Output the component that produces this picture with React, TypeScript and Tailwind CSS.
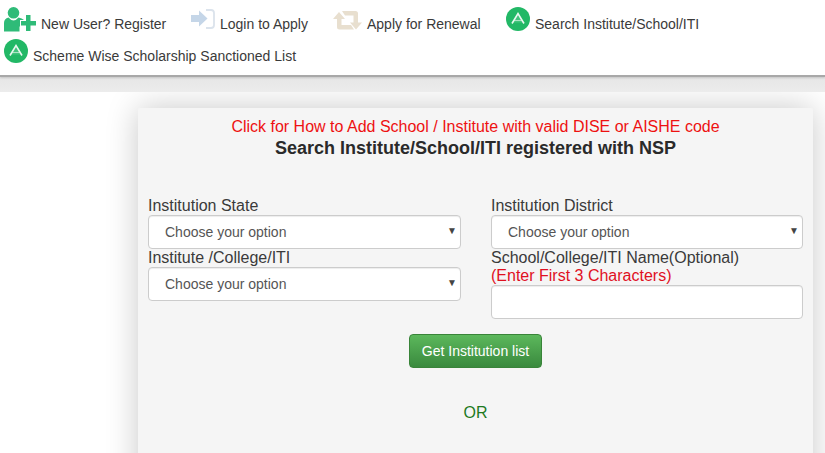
const UserPlusIcon = () => (
  <svg width="32" height="25" viewBox="0 0 32 25" className="shrink-0">
    <ellipse cx="9.5" cy="5.8" rx="5.8" ry="5.8" fill="#2fbb78" />
    <path d="M0 24.5 V16 Q0 11.5 4.5 10.5 Q7 13.5 9.5 13.5 Q12 13.5 14.5 10.5 Q18 11 20 13 H16 V19.5 H15.5 V24.5 Z" fill="#2fbb78" />
    <path d="M22 8 H26.5 V14 H32 V18.5 H26.5 V24 H22 V18.5 H17 V14 H22 Z" fill="#2fbb78" />
  </svg>
);

const LoginIcon = () => (
  <svg width="24" height="20" viewBox="0 0 24 20" className="mt-[2px] shrink-0">
    <path d="M0 6 H8 V1.5 L16.5 9.5 L8 17.5 V13 H0 Z" fill="#c5d6e8" />
    <path d="M15 1 H20 Q23 1 23 4 V16 Q23 19 20 19 H15" fill="none" stroke="#dbe3ec" strokeWidth="1.8" />
  </svg>
);

const RenewIcon = () => (
  <svg width="29" height="19" viewBox="0 0 29 19" className="mt-[4px] shrink-0">
    <path d="M0 8 L6 1 L12 8 H8.5 V14 H18 L21 18.5 H6.5 Q4 18.5 4 16 V8 Z" fill="#e8dfcf" />
    <path d="M29 11.5 L23 18.5 L17 11.5 H20.5 V4.5 H12 L9 0 H22.5 Q25 0 25 2.5 V11.5 Z" fill="#e8dfcf" />
  </svg>
);

const CircleIcon = () => (
  <svg width="24" height="24" viewBox="0 0 24 24" className="shrink-0">
    <circle cx="12" cy="12" r="12" fill="#22b866" />
    <path d="M12 7 L17 15.5 H7 Z" fill="#7fd8a6" opacity="0.35" />
    <path d="M6 16.5 L12 6.5 L18 16.5" fill="none" stroke="#ffffff" strokeWidth="1.6" opacity="0.9" />
    <path d="M8.5 13.5 H15.5" stroke="#ffffff" strokeWidth="1" opacity="0.55" />
  </svg>
);

function NavLink({ icon, label, className }: { icon: React.ReactNode; label: string; className?: string }) {
  return (
    <a className={`flex items-start gap-[5px] text-[14px] leading-[20px] text-[#3a3a3a] ${className ?? ""}`}>
      {icon}
      <span className="pt-[7px]">{label}</span>
    </a>
  );
}

function SelectBox() {
  return (
    <div className="relative">
      <select className="block h-[34px] w-full appearance-none rounded-[4px] border border-[#ccc] bg-white pl-4 text-[14px] text-[#555] shadow-[inset_0_1px_1px_rgba(0,0,0,0.075)]">
        <option>Choose your option</option>
      </select>
      <span className="pointer-events-none absolute right-[4px] top-[7px] text-[10px] leading-[18px] text-[#444]">▼</span>
    </div>
  );
}

export default function App() {
  return (
    <div className="h-[453px] w-[825px] overflow-hidden bg-white font-['Liberation_Sans',Arial,sans-serif] text-[#3a3a3a]">
      {/* Top menu */}
      <nav className="relative z-10 h-[77px] border-b-2 border-[#a8a8a8] bg-white pl-1 pt-[7px] shadow-[0_1px_2px_rgba(0,0,0,0.15)]">
        <div className="flex h-[32px]">
          <NavLink icon={<UserPlusIcon />} label="New User? Register" className="w-[187px]" />
          <NavLink icon={<LoginIcon />} label="Login to Apply" className="w-[142px]" />
          <NavLink icon={<RenewIcon />} label="Apply for Renewal" className="w-[173px]" />
          <NavLink icon={<CircleIcon />} label="Search Institute/School/ITI" />
        </div>
        <NavLink icon={<CircleIcon />} label="Scheme Wise Scholarship Sanctioned List" className="gap-1" />
      </nav>
      <div className="relative z-[5] h-[15px] bg-gradient-to-b from-[#e6e6e6] to-[#ececec]" />

      {/* Search panel */}
      <div className="pl-[138px] pr-3 pt-4">
        <section className="h-[400px] rounded-t-[2px] bg-[#f5f5f5] px-[10px] pt-[10px] shadow-[0_0_32px_rgba(0,0,0,0.22)]">
          <p className="text-center text-[16px] leading-[18px] text-[#ee1111]">
            Click for How to Add School / Institute with valid DISE or AISHE code
          </p>
          <h2 className="mt-[2px] text-center text-[18px] font-bold leading-[20px] text-[#2a2a2a]">
            Search Institute/School/ITI registered with NSP
          </h2>

          <div className="mt-[38px] grid grid-cols-[313px_312px] gap-x-[30px]">
            <div>
              <label className="block text-[16px] leading-[19px]">Institution State</label>
              <SelectBox />
              <label className="block text-[16px] leading-[18px]">Institute /College/ITI</label>
              <SelectBox />
            </div>
            <div>
              <label className="block text-[16px] leading-[19px]">Institution District</label>
              <SelectBox />
              <label className="block text-[16px] leading-[18px]">School/College/ITI Name(Optional)</label>
              <span className="block text-[16px] leading-[18px] text-[#e0101f]">(Enter First 3 Characters)</span>
              <input className="block h-[34px] w-full rounded-[4px] border border-[#ccc] bg-white shadow-[inset_0_1px_1px_rgba(0,0,0,0.075)]" />
            </div>
          </div>

          <div className="mt-[15px] flex justify-center">
            <button className="h-[34px] w-[133px] rounded-[4px] border border-[#398439] bg-gradient-to-b from-[#5cb85c] to-[#3a8a3e] text-[14px] text-white">
              Get Institution list
            </button>
          </div>
          <p className="mt-[36px] text-center text-[16px] leading-[18px] text-[#1e7a1e]">OR</p>
        </section>
      </div>
    </div>
  );
}
